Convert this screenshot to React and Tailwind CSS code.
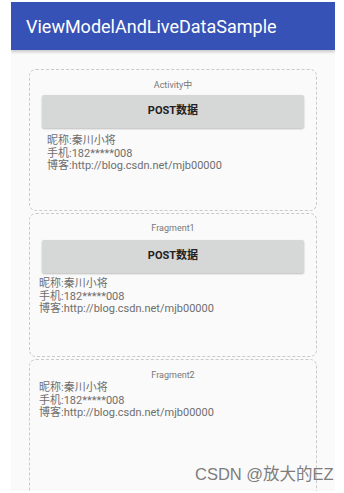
import React from "react";

const font = { fontFamily: 'Roboto, "Noto Sans CJK SC", sans-serif' };

function Info({ indent }) {
  return (
    <div className={`${indent} text-[11px] leading-[12.5px] text-[#6e6e6e]`}>
      <div>昵称:秦川小将</div>
      <div>手机:182*****008</div>
      <div>博客:http://blog.csdn.net/mjb00000</div>
    </div>
  );
}

function PostButton() {
  return (
    <div className="mx-[12px] h-[33px] rounded-[2px] bg-[#d6d7d7] shadow-[0_1px_2px_rgba(0,0,0,0.25)] flex items-center justify-center text-[11px] font-bold text-[#222]">
      POST数据
    </div>
  );
}

export default function App() {
  return (
    <div className="w-[344px] h-[493px] bg-white pt-[2px] pl-[11px]" style={font}>
      <div className="relative w-[324px] h-[489px] bg-[#fafafa] overflow-hidden">
        <div className="h-[48px] bg-[#3752b6] flex items-center pl-[15px] shadow-[0_2px_3px_rgba(0,0,0,0.2)] relative z-10">
          <span className="text-white text-[18px]">ViewModelAndLiveDataSample</span>
        </div>
        <div className="px-[18px] pt-[19px] flex flex-col gap-[2px]">
          <div className="h-[142px] border border-dashed border-[#cacaca] rounded-[7px] pt-[9px]">
            <div className="text-center text-[9px] leading-[12px] text-[#777]">Activity中</div>
            <div className="mt-[4px]">
              <PostButton />
            </div>
            <div className="mt-[7px]">
              <Info indent="pl-[17px]" />
            </div>
          </div>
          <div className="h-[144px] border border-dashed border-[#cacaca] rounded-[7px] pt-[8px]">
            <div className="text-center text-[9px] leading-[12px] text-[#777]">Fragment1</div>
            <div className="mt-[6px]">
              <PostButton />
            </div>
            <div className="mt-[5px]">
              <Info indent="pl-[9px]" />
            </div>
          </div>
          <div className="h-[160px] border border-dashed border-[#cacaca] rounded-[7px] pt-[9px]">
            <div className="text-center text-[9px] leading-[12px] text-[#777]">Fragment2</div>
            <div className="mt-[1px]">
              <Info indent="pl-[9px]" />
            </div>
          </div>
        </div>
        <div className="absolute left-[184px] top-[462px] text-[16.5px] leading-[20px] text-[#7d7d7d] whitespace-nowrap" style={{ fontFamily: '"Liberation Sans", "Noto Sans CJK SC", sans-serif' }}>
          CSDN @放大的EZ
        </div>
      </div>
    </div>
  );
}
